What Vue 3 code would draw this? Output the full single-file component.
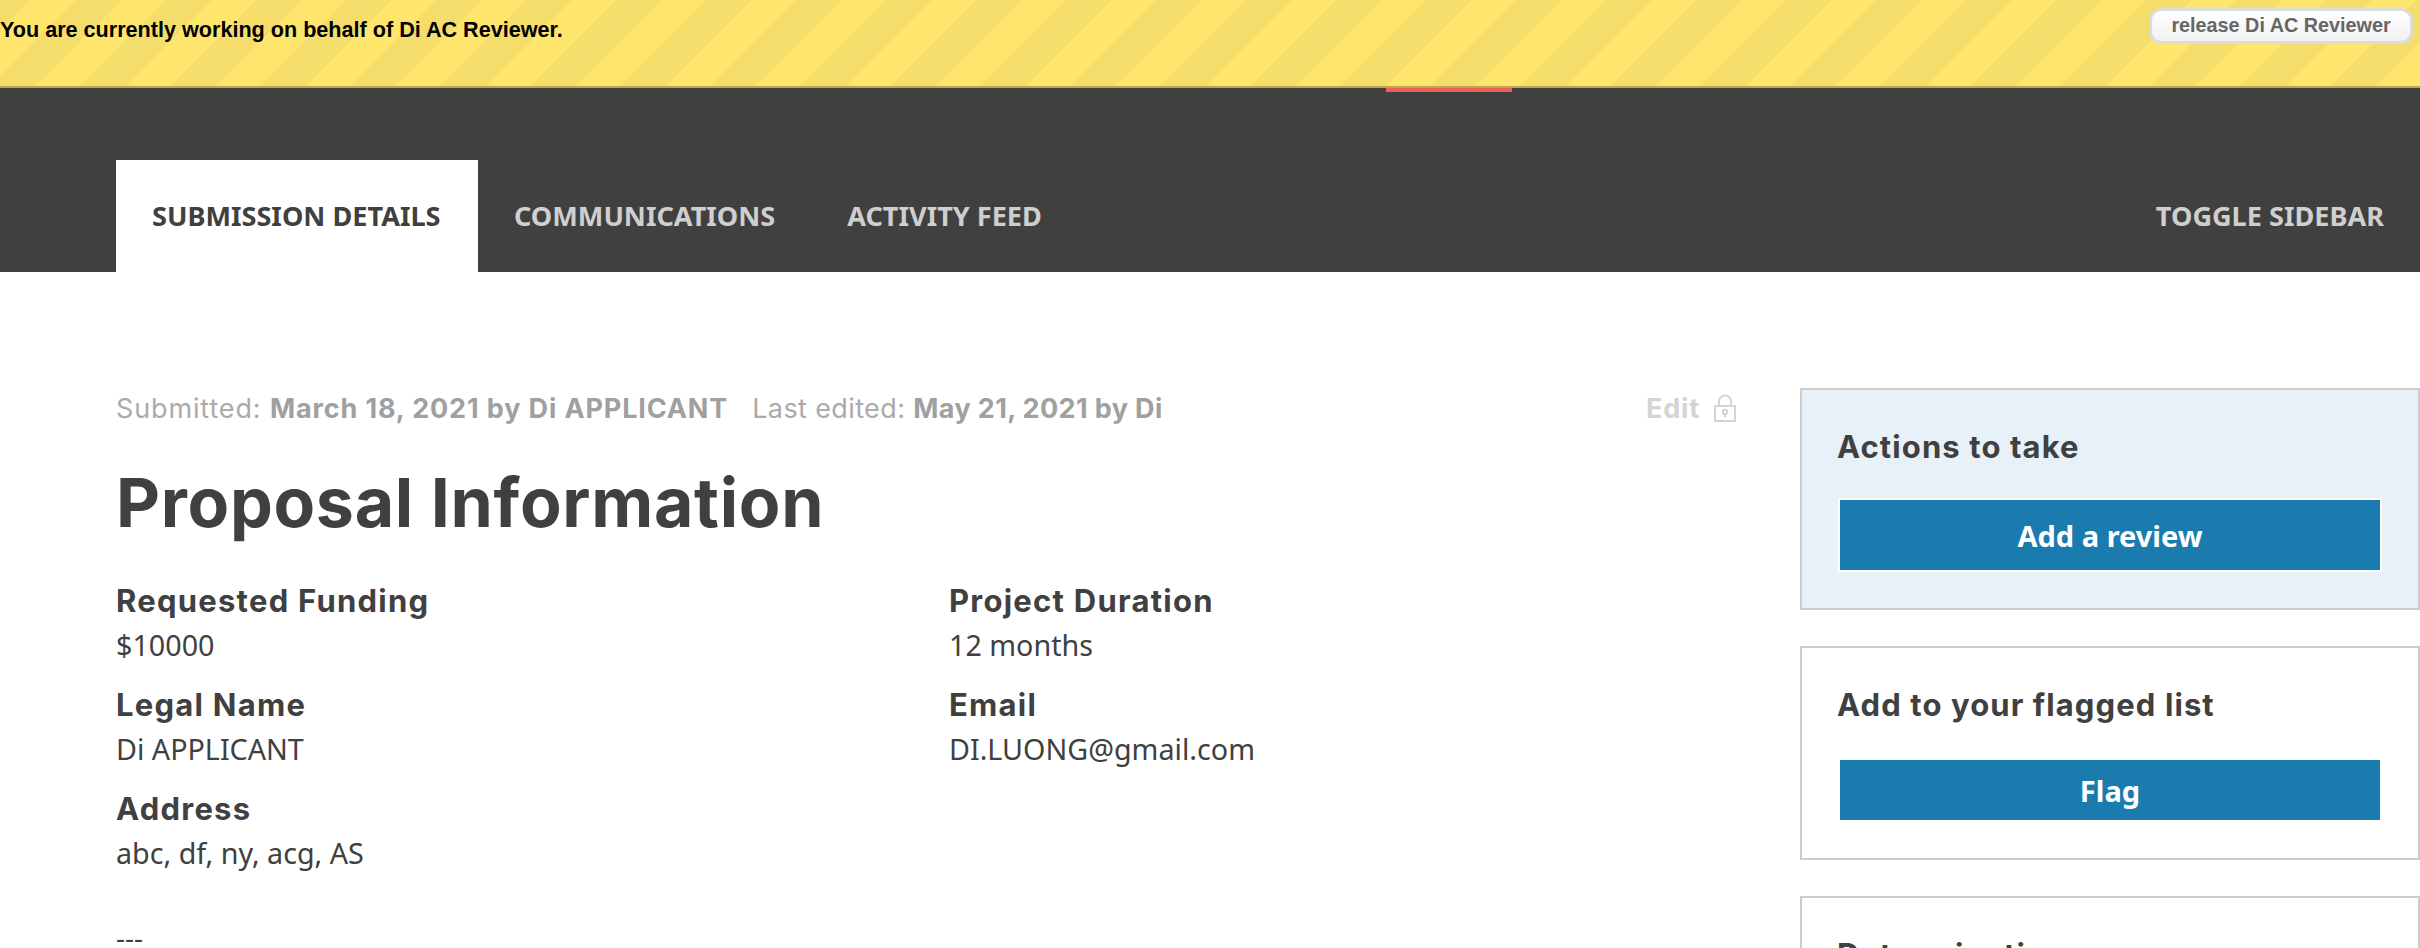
<script setup>
const fields = [
  [{ label: 'Requested Funding', value: '$10000' }, { label: 'Project Duration', value: '12 months' }],
  [{ label: 'Legal Name', value: 'Di APPLICANT' }, { label: 'Email', value: 'DI.LUONG@gmail.com' }],
  [{ label: 'Address', value: 'abc, df, ny, acg, AS' }],
]
</script>

<template>
  <div class="page">
    <div class="banner">
      <span class="banner-text">You are currently working on behalf of Di AC Reviewer.</span>
      <button class="release">release Di AC Reviewer</button>
    </div>
    <header class="header">
      <div class="progress"></div>
      <nav class="tabs">
        <a class="tab active">SUBMISSION DETAILS</a>
        <a class="tab">COMMUNICATIONS</a>
        <a class="tab">ACTIVITY FEED</a>
        <a class="tab toggle">TOGGLE SIDEBAR</a>
      </nav>
    </header>
    <div class="content">
      <main class="main">
        <div class="meta">
          <span class="meta-item">Submitted: <b>March 18, 2021 by Di APPLICANT</b></span>
          <span class="meta-item edited">Last edited: <b>May 21, 2021 by Di</b></span>
          <span class="edit">
            Edit
            <svg class="lock" viewBox="0 0 22 28" width="22" height="28" fill="none" stroke="#d4d4d4" stroke-width="2">
              <path d="M5 12V7.5a6 6 0 0 1 12 0V12" />
              <rect x="1" y="12" width="20" height="15" />
              <circle cx="11" cy="18" r="2.2" />
              <path d="M11 20v3" />
            </svg>
          </span>
        </div>
        <h1 class="title">Proposal Information</h1>
        <div v-for="(row, i) in fields" :key="i" class="row">
          <div v-for="f in row" :key="f.label" class="field">
            <h5 class="label">{{ f.label }}</h5>
            <p class="value">{{ f.value }}</p>
          </div>
        </div>
        <p class="rule">---</p>
      </main>
      <aside class="side">
        <section class="card tinted">
          <h4 class="card-title">Actions to take</h4>
          <button class="btn outlined">Add a review</button>
        </section>
        <section class="card plain">
          <h4 class="card-title">Add to your flagged list</h4>
          <button class="btn small">Flag</button>
        </section>
        <section class="card plain">
          <h4 class="card-title">Determination</h4>
        </section>
      </aside>
    </div>
  </div>
</template>

<style>
html, body { margin: 0; height: 948px; overflow: hidden; background: #fff; }
</style>

<style scoped>
.page { width: 2420px; height: 948px; overflow: hidden; font-family: "Noto Sans", sans-serif; color: #404040; }
.banner {
  height: 86px; border-bottom: 2px solid #b9a74f; display: flex; justify-content: space-between; align-items: flex-start;
  background: repeating-linear-gradient(135deg, #f4dd6b 0, #f4dd6b 21.92px, #fee56c 21.92px, #fee56c 53.74px, #f4dd6b 53.74px, #f4dd6b 63.64px);
}
.banner-text { font: 700 21.6px/24px "Liberation Sans", Arial, sans-serif; color: #000; margin-top: 18px; }
.release {
  margin: 8px 7px 0 0; width: 264px; height: 36px; padding: 0; border: 3px solid #dcdcdc; border-radius: 12px;
  background: linear-gradient(#fff, #f1f1f1); color: #666; font: 700 19.8px/1 "Liberation Sans", Arial, sans-serif;
}
.header { position: relative; height: 184px; background: #404040; display: flex; align-items: flex-end; }
.progress { position: absolute; left: 1386px; top: 0; width: 126px; height: 4px; background: #f05e5a; }
.tabs { display: flex; width: 100%; padding-left: 116px; box-sizing: border-box; height: 112px; }
.tab {
  display: flex; align-items: center; padding: 0 36px 2px; font-size: 27.1px; font-weight: 700; color: #cfcfcf;
}
.tab.active { background: #fff; color: #404040; width: 362px; box-sizing: border-box; }
.toggle { margin-left: auto; }
.content { display: flex; padding-left: 116px; }
.main { width: 1620px; padding-top: 120px; box-sizing: border-box; }
.meta { display: flex; align-items: center; height: 32px; font-family: Inter, sans-serif; font-size: 27px; letter-spacing: 0.87px; font-weight: 400; color: #aaa; }
.meta b { font-weight: 700; color: #a0a0a0; }
.meta-item { margin-right: 24px; }
.edited { letter-spacing: 0.38px; }
.edit { margin-left: auto; display: flex; align-items: center; gap: 14px; color: #d4d4d4; font-weight: 700; }
.title { margin: 34px 0 33px; font: 700 68px/88px Inter, sans-serif; letter-spacing: 0.7px; color: #404040; }
.row { display: grid; grid-template-columns: 833px 1fr; }
.field { height: 104px; }
.label { margin: 0; font: 700 31px/44px Inter, sans-serif; letter-spacing: 1.25px; color: #404040; }
.value { margin: 0; font-size: 28.7px; line-height: 44px; color: #404040; }
.rule { margin: 36px 0 0; font-size: 28px; line-height: 20px; }
.side { width: 620px; margin-left: 64px; padding-top: 116px; box-sizing: border-box; flex-shrink: 0; }
.card { border: 2px solid #ccc; box-sizing: border-box; padding: 0 36px; margin-bottom: 36px; }
.tinted { background: #e8f1f7; height: 222px; }
.plain { height: 214px; }
.card-title { margin: 35px 0 0 -1px; font: 700 31px/44px Inter, sans-serif; letter-spacing: 1.1px; color: #404040; }
.btn { display: block; border: 0; background: #1a7cae; color: #fff; font: 700 29px/1 "Noto Sans", sans-serif; padding: 0; }
.outlined { width: 544px; height: 74px; margin-top: 29px; border: 2px solid #fff; }
.small { height: 60px; margin-top: 33px; width: 540px; margin-left: 2px; }
</style>
